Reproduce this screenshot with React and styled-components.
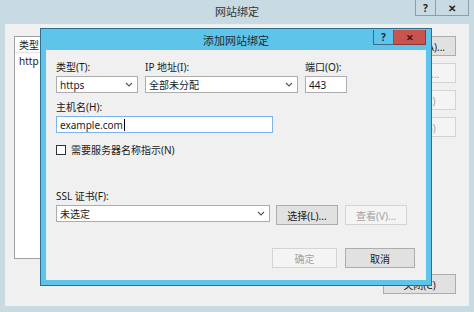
import React from "react";
import styled, { createGlobalStyle } from "styled-components";

const GlobalStyle = createGlobalStyle`
  html, body { margin: 0; padding: 0; }
  body {
    width: 474px;
    height: 312px;
    overflow: hidden;
    font-family: "Noto Sans", "Noto Sans CJK SC", sans-serif;
    font-size: 10px;
    color: #1a1a1a;
  }
`;

const Chevron = () => (
  <svg width="8" height="5" viewBox="0 0 8 5">
    <path d="M1 1 L4 4 L7 1" fill="none" stroke="#555" strokeWidth="1.1" />
  </svg>
);

export default function App() {
  return (
    <>
      <GlobalStyle />
      <Window>
        <TitleBar>
          <TitleText>网站绑定</TitleText>
          <BgCaption>
            <BgCapBtn>?</BgCapBtn>
            <BgCapBtn wide>✕</BgCapBtn>
          </BgCaption>
        </TitleBar>
        <WinBody>
          <MainRow>
            <ListBox>
              <ListHead>类型</ListHead>
              <ListItem>http</ListItem>
            </ListBox>
            <SideButtons>
              <Btn>添加(A)...</Btn>
              <Btn disabled>编辑(E)...</Btn>
              <Btn disabled>删除(R)</Btn>
              <Btn disabled>浏览(B)</Btn>
            </SideButtons>
          </MainRow>
          <BottomRow>
            <Btn>关闭(C)</Btn>
          </BottomRow>
        </WinBody>

        <Dialog>
          <DlgTitleBar>
            <DlgTitle>添加网站绑定</DlgTitle>
            <DlgCaption>
              <HelpBtn>?</HelpBtn>
              <CloseBtn>✕</CloseBtn>
            </DlgCaption>
          </DlgTitleBar>
          <DlgBody>
            <TopGrid>
              <Field>
                <Label>类型(T):</Label>
                <Select>
                  <span>https</span>
                  <Chevron />
                </Select>
              </Field>
              <Field>
                <Label>IP 地址(I):</Label>
                <Select>
                  <span>全部未分配</span>
                  <Chevron />
                </Select>
              </Field>
              <Field>
                <Label>端口(O):</Label>
                <TextBox>443</TextBox>
              </Field>
            </TopGrid>

            <Field>
              <Label>主机名(H):</Label>
              <TextBox w={217} focus>
                example.com<Caret />
              </TextBox>
            </Field>

            <CheckRow>
              <CheckBox />
              <span>需要服务器名称指示(N)</span>
            </CheckRow>

            <SslField>
              <Label>SSL 证书(F):</Label>
              <SslRow>
                <Select w={214}>
                  <span>未选定</span>
                  <Chevron />
                </Select>
                <Btn w={62}>选择(L)...</Btn>
                <Btn w={62} disabled>查看(V)...</Btn>
              </SslRow>
            </SslField>

            <Footer>
              <Btn w={65} h={20} disabled>确定</Btn>
              <Btn w={70} h={20}>取消</Btn>
            </Footer>
          </DlgBody>
        </Dialog>
      </Window>
    </>
  );
}

const Window = styled.div`
  position: relative;
  width: 474px;
  height: 312px;
  background: #c8dbe3;
  display: flex;
  flex-direction: column;
  box-sizing: border-box;
  padding: 0 5px 6px 5px;
`;

const TitleBar = styled.div`
  height: 24px;
  display: flex;
  align-items: center;
  justify-content: center;
  position: relative;
`;

const TitleText = styled.div`
  font-family: "Noto Sans CJK SC", sans-serif;
  font-size: 11px;
  color: #333;
  margin-top: -2px;
`;

const BgCaption = styled.div`
  position: absolute;
  right: 0;
  top: 0;
  display: flex;
`;

const BgCapBtn = styled.div`
  width: ${(p) => (p.wide ? 33 : 21)}px;
  height: 16px;
  box-sizing: border-box;
  border: 1px solid #8e9ea6;
  border-top: none;
  border-left: ${(p) => (p.wide ? "none" : "1px solid #8e9ea6")};
  display: flex;
  align-items: center;
  justify-content: center;
  font-weight: bold;
  font-size: 10px;
  color: #222;
`;

const WinBody = styled.div`
  flex: 1;
  background: #f0f0f0;
  display: flex;
  flex-direction: column;
  padding: 12px 13px 0 9px;
  box-sizing: border-box;
`;

const MainRow = styled.div`
  display: flex;
  gap: 8px;
`;

const ListBox = styled.div`
  width: 361px;
  height: 223px;
  background: #fff;
  border: 1px solid #a0a0a0;
  box-sizing: border-box;
`;

const ListHead = styled.div`
  height: 15px;
  padding-left: 4px;
  line-height: 15px;
  border-bottom: 1px solid #e5e5e5;
  font-family: "Noto Sans CJK SC", sans-serif;
`;

const ListItem = styled.div`
  padding-left: 4px;
  line-height: 16px;
`;

const SideButtons = styled.div`
  display: flex;
  flex-direction: column;
  gap: 7px;
  & > div:first-child {
    justify-content: flex-end;
    padding-right: 10px;
  }
`;

const Btn = styled.div`
  width: ${(p) => p.w || 73}px;
  height: ${(p) => p.h || 20}px;
  box-sizing: border-box;
  display: flex;
  align-items: center;
  justify-content: center;
  background: ${(p) => (p.disabled ? "#f4f4f4" : "#e1e1e1")};
  border: 1px solid ${(p) => (p.disabled ? "#d4d4d4" : "#adadad")};
  color: ${(p) => (p.disabled ? "#a3a3a3" : "#1a1a1a")};
  flex-shrink: 0;
`;

const BottomRow = styled.div`
  display: flex;
  justify-content: flex-end;
  margin-top: 15px;
`;

const Dialog = styled.div`
  position: absolute;
  left: 40px;
  top: 28px;
  width: 392px;
  height: 258px;
  box-sizing: border-box;
  border: 1px solid #2f6f8e;
  background: #5fc4ea;
  padding: 0 5px 5px 5px;
  display: flex;
  flex-direction: column;
`;

const DlgTitleBar = styled.div`
  height: 21px;
  position: relative;
  display: flex;
  align-items: center;
  justify-content: center;
`;

const DlgTitle = styled.div`
  font-family: "Noto Sans CJK SC", sans-serif;
  font-size: 11px;
  color: #1e2a30;
`;

const DlgCaption = styled.div`
  position: absolute;
  right: 0;
  top: 1px;
  display: flex;
`;

const HelpBtn = styled.div`
  width: 21px;
  height: 15px;
  box-sizing: border-box;
  border: 1px solid #3a6d86;
  border-top: none;
  display: flex;
  align-items: center;
  justify-content: center;
  font-weight: bold;
  font-size: 10px;
  color: #1a2a33;
`;

const CloseBtn = styled.div`
  width: 32px;
  height: 15px;
  box-sizing: border-box;
  background: #c85450;
  border: 1px solid #8a3835;
  border-top: none;
  border-left: none;
  display: flex;
  align-items: center;
  justify-content: center;
  font-weight: bold;
  font-size: 9px;
  color: #3a1414;
`;

const DlgBody = styled.div`
  flex: 1;
  background: #f0f0f0;
  padding: 11px 10px 0 10px;
  display: flex;
  flex-direction: column;
`;

const TopGrid = styled.div`
  display: grid;
  grid-template-columns: 82px 153px 42px;
  column-gap: 7px;
  margin-bottom: 8px;
`;

const Field = styled.div`
  display: flex;
  flex-direction: column;
  gap: 2px;
`;

const Label = styled.div`
  line-height: 13px;
`;

const Select = styled.div`
  width: ${(p) => (p.w ? `${p.w}px` : "auto")};
  height: 17px;
  box-sizing: border-box;
  background: #fff;
  border: 1px solid #acacac;
  display: flex;
  align-items: center;
  justify-content: space-between;
  padding: 0 4px 0 3px;
  flex-shrink: 0;
`;

const TextBox = styled.div`
  width: ${(p) => (p.w ? `${p.w}px` : "auto")};
  height: 17px;
  box-sizing: border-box;
  background: #fff;
  border: 1px solid ${(p) => (p.focus ? "#7eb4ea" : "#abadb3")};
  display: flex;
  align-items: center;
  padding-left: 3px;
`;

const Caret = styled.span`
  display: inline-block;
  width: 1px;
  height: 12px;
  background: #000;
  margin-left: 1px;
`;

const CheckRow = styled.div`
  display: flex;
  align-items: center;
  gap: 5px;
  margin-top: 9px;
`;

const CheckBox = styled.div`
  width: 10px;
  height: 10px;
  box-sizing: border-box;
  border: 1px solid #333;
  background: #fff;
`;

const SslField = styled(Field)`
  margin-top: 33px;
`;

const SslRow = styled.div`
  display: flex;
  align-items: flex-start;
  gap: 6px;
  & > div:last-child {
    margin-left: 1px;
  }
`;

const Footer = styled.div`
  display: flex;
  justify-content: flex-end;
  gap: 8px;
  margin-top: 23px;
  padding-right: 1px;
`;
